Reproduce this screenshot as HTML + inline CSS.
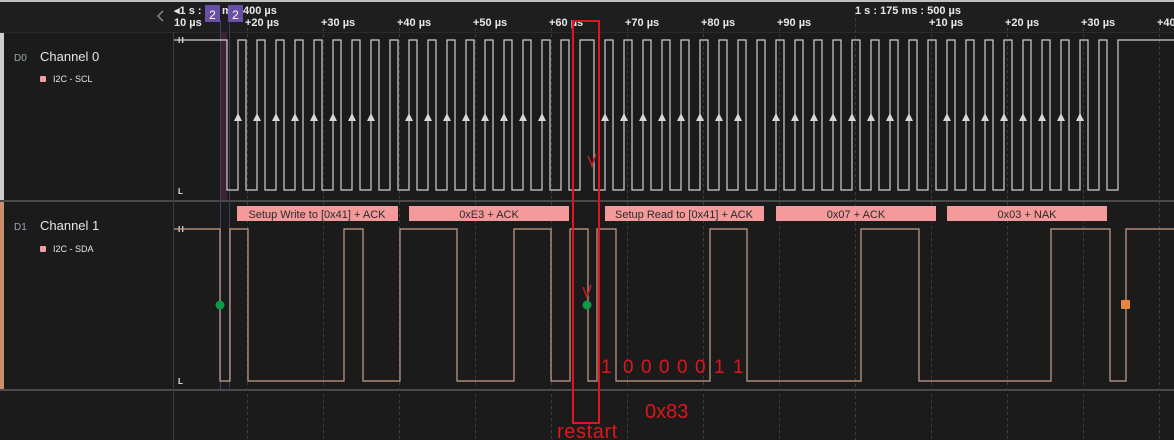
<!DOCTYPE html>
<html><head><meta charset="utf-8"><style>
html,body{margin:0;padding:0;width:1174px;height:440px;overflow:hidden;background:#1b1b1b;font-family:"Liberation Sans",sans-serif}
svg{position:absolute;left:0;top:0}
</style></head><body>
<svg width="1174" height="440" viewBox="0 0 1174 440" xmlns="http://www.w3.org/2000/svg" font-family="Liberation Sans, sans-serif">
<rect x="0" y="0" width="1174" height="440" fill="#1b1b1b"/>
<rect x="0" y="0" width="1174" height="2" fill="#bfbfbf"/>
<rect x="0" y="2" width="1174" height="30" fill="#1e1e1e"/>
<rect x="0" y="32" width="1174" height="1" fill="#2a2a2a"/>
<rect x="0" y="33" width="4" height="167" fill="#cfcfcf"/>
<rect x="0" y="202" width="4" height="188" fill="#c8906c"/>
<rect x="0" y="200" width="1174" height="2" fill="#4a4a4a"/>
<rect x="0" y="389" width="1174" height="2" fill="#4a4a4a"/>
<rect x="173" y="32" width="1" height="408" fill="#3a3a3a"/>
<g stroke="#3e3e3e" stroke-width="1" stroke-dasharray="3,3">
<line x1="247.5" y1="22" x2="247.5" y2="440"/><line x1="323.5" y1="22" x2="323.5" y2="440"/><line x1="399.5" y1="22" x2="399.5" y2="440"/><line x1="475.5" y1="22" x2="475.5" y2="440"/><line x1="551.5" y1="22" x2="551.5" y2="440"/><line x1="627.5" y1="22" x2="627.5" y2="440"/><line x1="703.5" y1="22" x2="703.5" y2="440"/><line x1="779.5" y1="22" x2="779.5" y2="440"/><line x1="855.5" y1="12" x2="855.5" y2="440"/><line x1="931.5" y1="22" x2="931.5" y2="440"/><line x1="1007.5" y1="22" x2="1007.5" y2="440"/><line x1="1083.5" y1="22" x2="1083.5" y2="440"/><line x1="1159.5" y1="22" x2="1159.5" y2="440"/>
</g>
<rect x="220" y="33" width="7" height="167" fill="#3a2430"/>
<line x1="220.5" y1="20" x2="220.5" y2="390" stroke="#4a3a6a"/>
<line x1="229.5" y1="20" x2="229.5" y2="390" stroke="#3a3a6a"/>
<g fill="#e8e8e8" font-size="11" font-weight="bold">
<text x="174" y="14">◂1 s : 1</text><text x="243" y="14">400 µs</text>
<text x="174" y="26">10 µs</text>
<text x="245" y="26">+20 µs</text><text x="321" y="26">+30 µs</text><text x="397" y="26">+40 µs</text><text x="473" y="26">+50 µs</text><text x="549" y="26">+60 µs</text><text x="625" y="26">+70 µs</text><text x="701" y="26">+80 µs</text><text x="777" y="26">+90 µs</text>
<text x="855" y="14">1 s : 175 ms : 500 µs</text>
<text x="929" y="26">+10 µs</text><text x="1005" y="26">+20 µs</text><text x="1081" y="26">+30 µs</text><text x="1157" y="26">+40</text>
</g>
<text x="222" y="14" fill="#e8e8e8" font-size="11" font-weight="bold">m</text>
<rect x="205" y="5" width="15" height="17" fill="#6a4fa8"/><text x="212.5" y="19" fill="#fff" font-size="12" text-anchor="middle">2</text>
<rect x="228" y="5" width="15" height="17" fill="#6a4fa8"/><text x="235.5" y="19" fill="#fff" font-size="12" text-anchor="middle">2</text>
<path d="M163,11 L158,16 L163,21" fill="none" stroke="#888" stroke-width="1.5"/>
<text x="14" y="61" fill="#9aa4b0" font-size="10">D0</text>
<text x="40" y="61" fill="#e6e6e6" font-size="13">Channel 0</text>
<rect x="40" y="76" width="6" height="6" rx="1" fill="#f0a0a0"/>
<text x="53" y="82" fill="#e6e6e6" font-size="9">I2C - SCL</text>
<text x="14" y="230" fill="#9aa4b0" font-size="10">D1</text>
<text x="40" y="230" fill="#e6e6e6" font-size="13">Channel 1</text>
<rect x="40" y="246" width="6" height="6" rx="1" fill="#f0a0a0"/>
<text x="53" y="252" fill="#e6e6e6" font-size="9">I2C - SDA</text>
<g fill="#e6e6e6" font-size="8" font-weight="bold">
<text x="178" y="43">H</text><text x="178" y="194">L</text>
<text x="178" y="232">H</text><text x="178" y="384">L</text>
</g>
<path fill="none" stroke="#d0d0d0" stroke-width="1.2" d="M174,40H227V190 H238V40H246V190 H257V40H265V190 H276V40H284V190 H295V40H303V190 H314V40H322V190 H333V40H341V190 H352V40H360V190 H371V40H379V190 H390V40H398V190 H409V40H417V190 H428V40H436V190 H447V40H455V190 H466V40H474V190 H485V40H493V190 H504V40H512V190 H523V40H531V190 H542V40H550V190 H561V40H569V190 H580V40H594V190 H605V40H613V190 H624V40H632V190 H643V40H651V190 H662V40H670V190 H681V40H689V190 H700V40H708V190 H719V40H727V190 H738V40H746V190 H757V40H765V190 H776V40H784V190 H795V40H803V190 H814V40H822V190 H833V40H841V190 H852V40H860V190 H871V40H879V190 H890V40H898V190 H909V40H917V190 H928V40H936V190 H947V40H955V190 H966V40H974V190 H985V40H993V190 H1004V40H1012V190 H1023V40H1031V190 H1042V40H1050V190 H1061V40H1069V190 H1080V40H1088V190 H1099V40H1107V190 H1118V40H1174"/>
<g fill="#d8d8d8">
<path d="M234,121L238,113L242,121Z M253,121L257,113L261,121Z M272,121L276,113L280,121Z M291,121L295,113L299,121Z M310,121L314,113L318,121Z M329,121L333,113L337,121Z M348,121L352,113L356,121Z M367,121L371,113L375,121Z"/>
<path d="M405,121L409,113L413,121Z M424,121L428,113L432,121Z M443,121L447,113L451,121Z M462,121L466,113L470,121Z M481,121L485,113L489,121Z M500,121L504,113L508,121Z M519,121L523,113L527,121Z M538,121L542,113L546,121Z"/>
<path d="M601,121L605,113L609,121Z M620,121L624,113L628,121Z M639,121L643,113L647,121Z M658,121L662,113L666,121Z M677,121L681,113L685,121Z M696,121L700,113L704,121Z M715,121L719,113L723,121Z M734,121L738,113L742,121Z"/>
<path d="M772,121L776,113L780,121Z M791,121L795,113L799,121Z M810,121L814,113L818,121Z M829,121L833,113L837,121Z M848,121L852,113L856,121Z M867,121L871,113L875,121Z M886,121L890,113L894,121Z M905,121L909,113L913,121Z"/>
<path d="M943,121L947,113L951,121Z M962,121L966,113L970,121Z M981,121L985,113L989,121Z M1000,121L1004,113L1008,121Z M1019,121L1023,113L1027,121Z M1038,121L1042,113L1046,121Z M1057,121L1061,113L1065,121Z M1076,121L1080,113L1084,121Z"/>
</g>
<g fill="#f59a9a">
<rect x="237" y="206" width="161" height="15"/><rect x="409" y="206" width="160" height="15"/><rect x="605" y="206" width="159" height="15"/><rect x="776" y="206" width="160" height="15"/><rect x="947" y="206" width="160" height="15"/>
</g>
<g fill="#2a2a2a" font-size="11" text-anchor="middle">
<text x="317" y="218">Setup Write to [0x41] + ACK</text><text x="489" y="218">0xE3 + ACK</text><text x="684" y="218">Setup Read to [0x41] + ACK</text><text x="856" y="218">0x07 + ACK</text><text x="1027" y="218">0x03 + NAK</text>
</g>
<path fill="none" stroke="#c8a08a" stroke-width="1.2" d="M174,229H220V381H230V229H248V381H344V229H363V381H400V229H457V381H514V229H551V381H570V229H588V381H597V229H616V381H710V229H747V381H861V229H919V381H1051V229H1110V381H1126V229H1174"/>
<circle cx="220" cy="305" r="4.5" fill="#0a9a4a"/>
<circle cx="587" cy="305" r="4.5" fill="#0a9a4a"/>
<rect x="1121" y="300" width="9" height="9" rx="1" fill="#e8873a"/>
<rect x="573" y="21" width="26" height="402" fill="none" stroke="#e0161e" stroke-width="2"/>
<path d="M588,156 L592,166 L596,154" fill="none" stroke="#c02020" stroke-width="1.5"/>
<path d="M583,287 L587,297 L591,285" fill="none" stroke="#c02020" stroke-width="1.5"/>
<g fill="#e0161e" font-size="19">
<text x="601" y="373">1</text><text x="623" y="373">0</text><text x="641" y="373">0</text><text x="659" y="373">0</text><text x="677" y="373">0</text><text x="695" y="373">0</text><text x="714" y="373">1</text><text x="733" y="373">1</text>
<text x="645" y="418" font-size="20">0x83</text>
<text x="557" y="438" font-size="20" letter-spacing="0.6">restart</text>
</g>
</svg>
</body></html>
